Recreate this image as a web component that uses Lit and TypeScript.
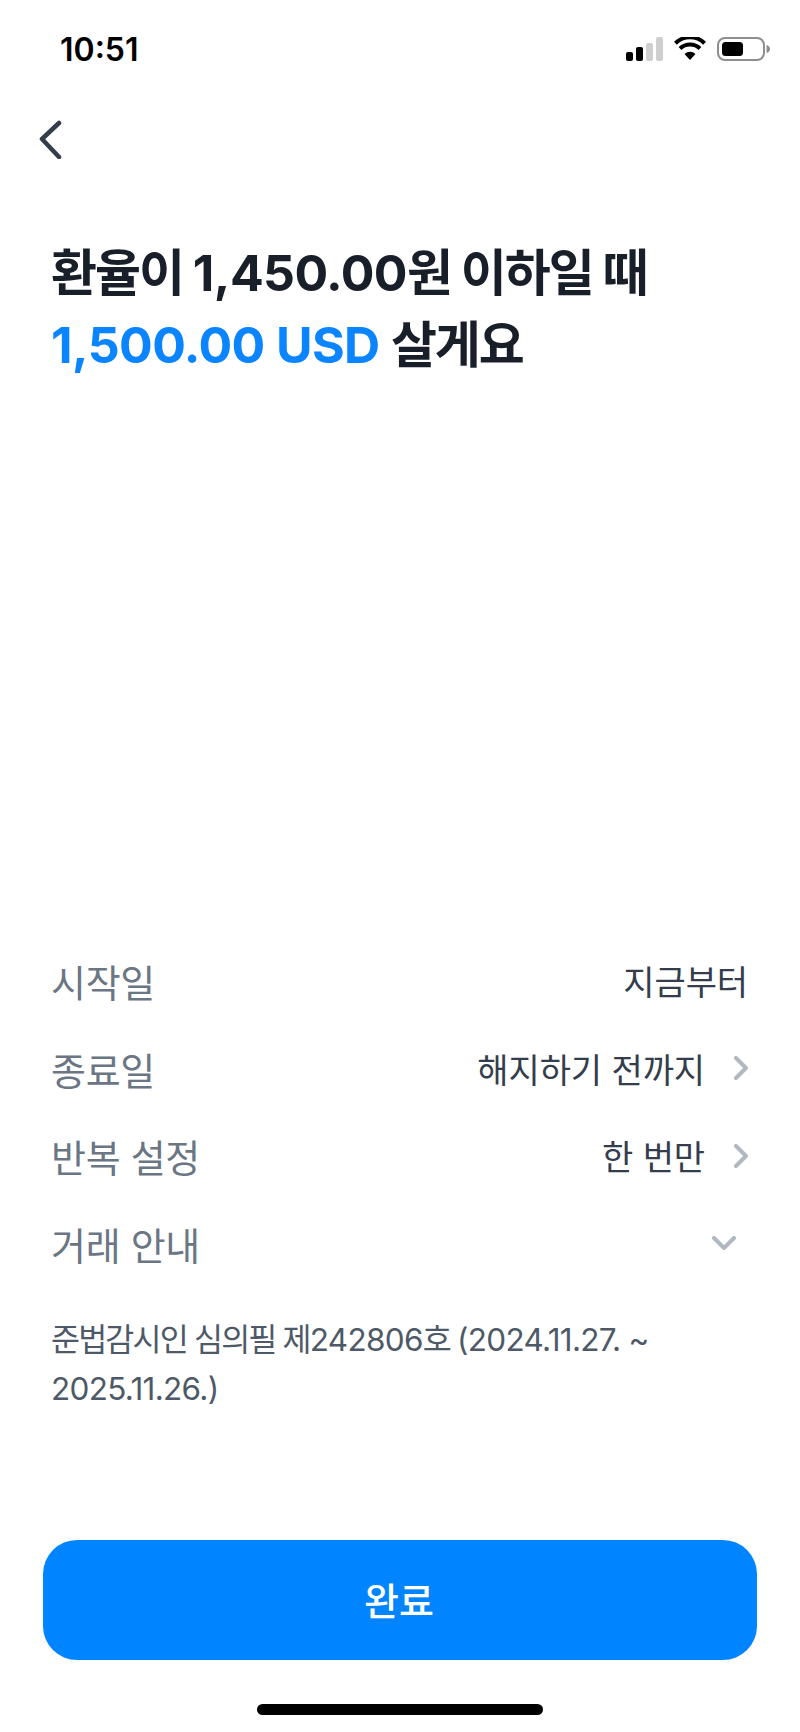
import { LitElement, html, css } from "lit";
import { customElement } from "lit/decorators.js";

@customElement("app-root")
export class AppRoot extends LitElement {
  static styles = css`
    :host {
      display: block;
      width: 800px;
      height: 1732px;
      background: #fff;
      font-family: Inter, "Noto Sans CJK KR", sans-serif;
      overflow: hidden;
    }
    .page {
      display: flex;
      flex-direction: column;
      height: 1732px;
    }
    .status {
      display: flex;
      justify-content: space-between;
      align-items: center;
      height: 50px;
      margin-top: 25px;
      padding: 0 30px 0 60px;
    }
    .time {
      font-size: 32px;
      font-weight: 600;
      color: #000;
      font-family: Inter, sans-serif;
      line-height: 38px;
    }
    .status-icons {
      display: flex;
      align-items: center;
      gap: 11px;
      margin-top: -2px;
    }
    .status-icons svg { display: block; }
    .nav {
      height: 36px;
      margin-top: 44px;
      padding-left: 38px;
    }
    .nav svg { display: block; }
    .title {
      margin: 82px 0 0;
      padding-left: 51px;
      font-size: 50px;
      line-height: 72px;
      font-weight: 700;
      color: #191f28;
      letter-spacing: -2px;
    }
    .title .num { letter-spacing: -0.6px; }
    .blue { color: #0a84ff; }
    .spacer { flex: 1; }
    .rows {
      display: flex;
      flex-direction: column;
      padding: 0 52px 0 51px;
    }
    .row {
      display: flex;
      justify-content: space-between;
      align-items: center;
      height: 87.5px;
      font-size: 38px;
      letter-spacing: -0.3px;
    }
    .label { color: #6b7684; }
    .value {
      display: flex;
      align-items: center;
      gap: 29px;
      color: #333d4b;
      font-size: 34px;
      letter-spacing: -0.1px;
    }
    .chev { display: block; }
    .chev-down { display: block; margin-right: 12px; }
    .note {
      margin: 28px 0 0;
      padding: 0 44px 0 51px;
      font-size: 31.5px;
      line-height: 49px;
      color: #4e5968;
      letter-spacing: -1.8px;
    }
    .note .num { letter-spacing: -0.7px; }
    .btn {
      display: flex;
      align-items: center;
      justify-content: center;
      height: 120px;
      padding: 0 2px 3px 0;
      box-sizing: border-box;
      margin: 127px 43px 0;
      border-radius: 34px;
      background: #0084ff;
      color: #fff;
      font-size: 38px;
      font-weight: 500;
    }
    .home-wrap {
      display: flex;
      justify-content: center;
      padding: 44px 0 17px;
    }
    .home {
      width: 286px;
      height: 11px;
      border-radius: 6px;
      background: #000;
    }
  `;

  private chevron() {
    return html`<svg class="chev" width="14" height="24" viewBox="0 0 14 24" fill="none">
      <path d="M2 2 L12 12 L2 22" stroke="#b0b8c1" stroke-width="4" stroke-linecap="round" stroke-linejoin="round"/>
    </svg>`;
  }

  render() {
    return html`<div class="page">
      <div class="status">
        <span class="time">10:51</span>
        <div class="status-icons">
          <svg width="37" height="24" viewBox="0 0 37 24">
            <rect x="0" y="15" width="7" height="9" rx="2" fill="#000"/>
            <rect x="10" y="10" width="7" height="14" rx="2" fill="#000"/>
            <rect x="20" y="6" width="7" height="18" rx="2" fill="#cfcfcf"/>
            <rect x="30" y="0" width="7" height="24" rx="2" fill="#cfcfcf"/>
          </svg>
          <svg width="32" height="24" viewBox="0 0 32 24">
            <path d="M16 23 L10.5 17 A8 8 0 0 1 21.5 17 Z" fill="#000"/>
            <path d="M6 11.5 A14.5 14.5 0 0 1 26 11.5" fill="none" stroke="#000" stroke-width="4"/>
            <path d="M1.4 6.2 A21 21 0 0 1 30.6 6.2" fill="none" stroke="#000" stroke-width="4"/>
          </svg>
          <svg width="53" height="24" viewBox="0 0 53 24">
            <rect x="1" y="1" width="46" height="22" rx="7" fill="none" stroke="#8e8e8e" stroke-width="2"/>
            <rect x="5" y="5" width="21" height="14" rx="3.5" fill="#000"/>
            <path d="M49.5 8 C51.5 8.5 53 10 53 12 C53 14 51.5 15.5 49.5 16 Z" fill="#8e8e8e"/>
          </svg>
        </div>
      </div>
      <div class="nav">
        <svg width="26" height="40" viewBox="0 0 26 40" fill="none">
          <path d="M21 4 L4 20 L21 38" stroke="#333d4b" stroke-width="4.5" stroke-linecap="round" stroke-linejoin="round"/>
        </svg>
      </div>
      <h1 class="title">환율이 <span class="num">1,450.00</span>원 이하일 때<br /><span class="num"><span class="blue">1,500.00 USD</span> </span>살게요</h1>
      <div class="spacer"></div>
      <div class="rows">
        <div class="row"><span class="label">시작일</span><span class="value">지금부터</span></div>
        <div class="row"><span class="label">종료일</span><span class="value">해지하기 전까지 ${this.chevron()}</span></div>
        <div class="row"><span class="label">반복 설정</span><span class="value">한 번만 ${this.chevron()}</span></div>
        <div class="row"><span class="label">거래 안내</span>
          <svg class="chev-down" width="24" height="14" viewBox="0 0 24 14" fill="none">
            <path d="M2 2 L12 12 L22 2" stroke="#b0b8c1" stroke-width="4" stroke-linecap="round" stroke-linejoin="round"/>
          </svg>
        </div>
      </div>
      <p class="note">준법감시인 심의필 제<span class="num">242806</span>호 <span class="num">(2024.11.27. ~</span><br /><span class="num">2025.11.26.)</span></p>
      <div class="btn">완료</div>
      <div class="home-wrap"><div class="home"></div></div>
    </div>`;
  }
}
